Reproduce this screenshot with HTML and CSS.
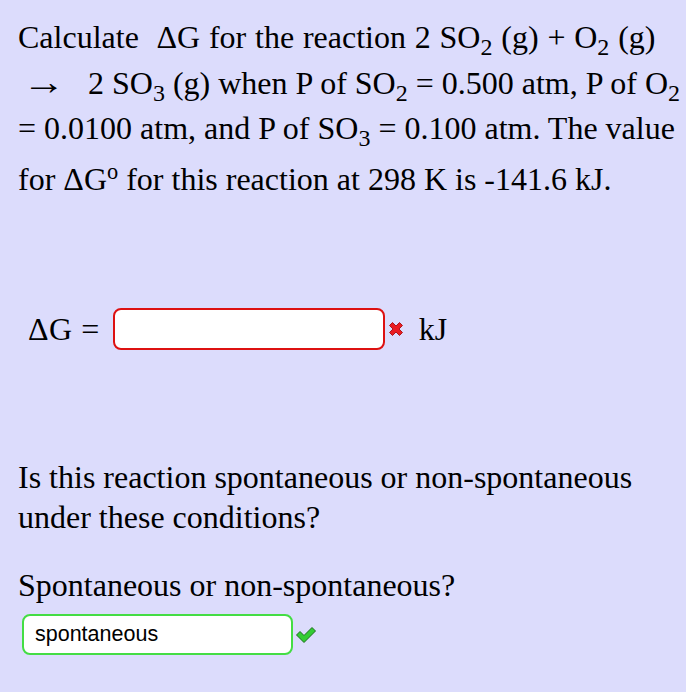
FILE: index.html
```html
<!DOCTYPE html>
<html>
<head>
<meta charset="utf-8">
<link rel="stylesheet" href="styles.css">
</head>
<body>
<div class="page">
  <div class="question">
    <div class="line line-first">Calculate &nbsp;ΔG for the reaction 2 SO<sub>2</sub> (g) + O<sub>2</sub> (g)</div>
    <div class="line"><span class="arrow">→</span>2 SO<sub>3</sub> (g) when P of SO<sub>2</sub> = 0.500 atm, P of O<sub>2</sub></div>
    <div class="line">= 0.0100 atm, and P of SO<sub>3</sub> = 0.100 atm. The value</div>
    <div class="line line-last">for ΔG<sup>o</sup> for this reaction at 298 K is -141.6 kJ.</div>
  </div>

  <div class="answer-row">
    <span class="label">ΔG =</span>
    <span class="field field-wrong"></span>
    <svg class="mark" width="16" height="16" viewBox="0 0 16 16"><path d="M1.5 4.5 L4.5 1.5 L8 5 L11.5 1.5 L14.5 4.5 L11 8 L14.5 11.5 L11.5 14.5 L8 11 L4.5 14.5 L1.5 11.5 L5 8 Z" fill="#ea1c22" stroke="#a50c10" stroke-width="0.9" stroke-linejoin="round"/></svg>
    <span class="unit">kJ</span>
  </div>

  <p class="q2">Is this reaction spontaneous or non-spontaneous<br>under these conditions?</p>

  <p class="q3">Spontaneous or non-spontaneous?</p>
  <div class="choice-row">
    <span class="field field-right">spontaneous</span>
    <svg class="check" width="22" height="18" viewBox="0 0 22 18"><path d="M1.5 9 L5 5.5 L9 9.5 L17 1.5 L20.5 5 L9 16.5 Z" fill="#33cc33" stroke="#1c6e1c" stroke-width="1" stroke-linejoin="round"/></svg>
  </div>
</div>
</body>
</html>
```
FILE: styles.css
```css
html, body {
  margin: 0;
  padding: 0;
  background: #dcdcfc;
}
.page {
  font-family: "Liberation Serif", "Times New Roman", serif;
  color: #000;
  padding: 15px 18px 0 18px;
  font-size: 32px;
}
.question .line {
  line-height: 45px;
  white-space: nowrap;
}
.question .line-first {
  word-spacing: 0.8px;
}
.question .line-last {
  padding-top: 6px;
}
.arrow {
  display: inline-block;
  font-size: 36px;
  margin-left: 8px;
  margin-right: 26px;
  transform: scaleX(1.2);
}
sub {
  font-size: 75%;
  vertical-align: -0.3em;
  line-height: 0;
}
sup {
  font-size: 70%;
  vertical-align: 0.5em;
  line-height: 0;
}
.answer-row {
  display: flex;
  align-items: center;
  margin-top: 106px;
  padding-left: 10px;
  line-height: 1.15;
}
.label {
  margin-right: 13px;
  letter-spacing: 0.5px;
}
.field {
  display: inline-block;
  box-sizing: border-box;
  background: #fff;
  border-radius: 8px;
  border: 2px solid;
}
.field-wrong {
  width: 272px;
  height: 42px;
  border-color: #dd1111;
}
.mark {
  margin-left: 3px;
  margin-right: 15px;
}
.q2 {
  margin: 107px 0 0 0;
  line-height: 40px;
}
.q3 {
  margin: 28px 0 0 0;
  line-height: 40px;
}
.choice-row {
  display: flex;
  align-items: center;
  margin-top: 9px;
  padding-left: 4px;
}
.field-right {
  width: 271px;
  height: 41px;
  border-color: #44dd44;
  font-family: "Liberation Sans", Arial, sans-serif;
  font-size: 21.5px;
  line-height: 37px;
  padding-left: 11px;
}
.check {
  margin-left: 2px;
}
```
